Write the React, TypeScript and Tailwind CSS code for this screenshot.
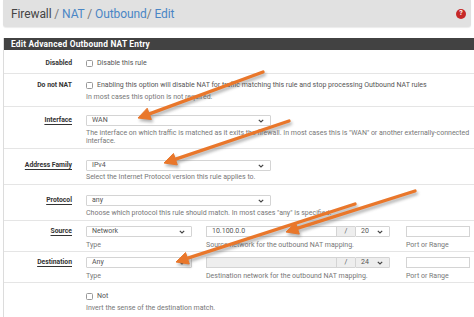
import React from "react";

type ArrowDef = { x1: number; y1: number; x2: number; y2: number };

const arrows: ArrowDef[] = [
  { x1: 263, y1: 72, x2: 138, y2: 118 },
  { x1: 289, y1: 121, x2: 164, y2: 163 },
  { x1: 415, y1: 191, x2: 286, y2: 232 },
  { x1: 355, y1: 204, x2: 176, y2: 262 },
];

function Arrow({ a, color, dx = 0, dy = 0 }: { a: ArrowDef; color: string; dx?: number; dy?: number }) {
  const vx = a.x2 - a.x1;
  const vy = a.y2 - a.y1;
  const len = Math.hypot(vx, vy);
  const ux = vx / len;
  const uy = vy / len;
  const headLen = 12;
  const headW = 6;
  const bx = a.x2 - ux * headLen;
  const by = a.y2 - uy * headLen;
  const px = -uy;
  const py = ux;
  const pts = [
    [a.x2 + dx, a.y2 + dy],
    [bx + px * headW + dx, by + py * headW + dy],
    [bx - px * headW + dx, by - py * headW + dy],
  ]
    .map((p) => p.join(","))
    .join(" ");
  return (
    <g>
      <line
        x1={a.x1 + dx}
        y1={a.y1 + dy}
        x2={bx + ux * 2 + dx}
        y2={by + uy * 2 + dy}
        stroke={color}
        strokeWidth={3.4}
        strokeLinecap="round"
      />
      <polygon points={pts} fill={color} strokeLinejoin="round" stroke={color} strokeWidth={1} />
    </g>
  );
}

function Chevron() {
  return (
    <svg width="6" height="4" viewBox="0 0 6 4" className="shrink-0">
      <path d="M0.8 0.8 L3 3 L5.2 0.8" fill="none" stroke="#444" strokeWidth="1.2" />
    </svg>
  );
}

function Select({ value, w, disabled = false }: { value: string; w: string; disabled?: boolean }) {
  return (
    <div
      className={`${w} h-[11px] border border-[#d4d4d4] rounded-[1px] flex items-center justify-between pl-[5px] pr-[6px] text-[7px] text-[#555] ${
        disabled ? "bg-[#eeeeee]" : "bg-white"
      }`}
    >
      <span>{value}</span>
      <Chevron />
    </div>
  );
}

function Checkbox() {
  return <div className="w-[7px] h-[7px] border border-[#999] rounded-[1.5px] bg-white shrink-0" />;
}

function Help({ children, className = "" }: { children: React.ReactNode; className?: string }) {
  return <div className={`text-[7px] leading-[8px] text-[#777] whitespace-nowrap ${className}`}>{children}</div>;
}

function Label({ text, underline = false }: { text: string; underline?: boolean }) {
  return (
    <div className="w-[68px] shrink-0 h-[11px] flex items-center justify-end">
      <span
        className={`text-[6.8px] font-bold text-[#333] whitespace-nowrap ${
          underline ? "underline decoration-[#333] underline-offset-[1.5px]" : ""
        }`}
      >
        {text}
      </span>
    </div>
  );
}

export default function App() {
  return (
    <div
      className="relative w-[474px] h-[317px] overflow-hidden bg-white"
      style={{ fontFamily: "Roboto, 'Liberation Sans', sans-serif" }}
    >
      {/* Breadcrumb */}
      <div className="mx-[3px] h-[27px] bg-[#e1e1e1] rounded-b-[3px] shadow-[0_1px_1px_rgba(0,0,0,0.08)] flex items-center justify-between pl-[8px] pr-[5px]">
        <div className="text-[12px] text-[#444] whitespace-nowrap tracking-[-0.1px]">
          Firewall <span className="text-[#777]">/</span> <span className="text-[#4a86c5]">NAT</span>{" "}
          <span className="text-[#777]">/</span> <span className="text-[#4a86c5]">Outbound</span>
          <span className="text-[#777]">/</span> <span className="text-[#4a86c5]">Edit</span>
        </div>
        <div className="w-[10px] h-[10px] rounded-full bg-[#c62828] text-white text-[7px] font-bold flex items-center justify-center leading-none">
          ?
        </div>
      </div>

      {/* Panel */}
      <div className="mt-[11px] ml-[3px] border-l border-[#dcdcdc]">
        <div className="h-[12px] bg-[#424242] flex items-center pl-[7px]">
          <span className="text-white font-bold text-[8.4px] tracking-[0.2px] whitespace-nowrap">
            Edit Advanced Outbound NAT Entry
          </span>
        </div>

        {/* Disabled */}
        <div className="h-[24px] flex pt-[8px] border-b border-[#e5e5e5]">
          <Label text="Disabled" />
          <div className="ml-[14px] h-[11px] flex items-center gap-[4px]">
            <Checkbox />
            <span className="text-[7px] text-[#555]">Disable this rule</span>
          </div>
        </div>

        {/* Do not NAT */}
        <div className="h-[33px] flex pt-[6px] border-b border-[#e5e5e5]">
          <Label text="Do not NAT" />
          <div className="ml-[14px]">
            <div className="h-[11px] flex items-center gap-[4px]">
              <Checkbox />
              <span className="text-[7px] text-[#555] whitespace-nowrap">
                Enabling this option will disable NAT for traffic matching this rule and stop processing Outbound NAT rules
              </span>
            </div>
            <Help className="mt-[2px]">In most cases this option is not required.</Help>
          </div>
        </div>

        {/* Interface */}
        <div className="h-[42px] flex pt-[8px] border-b border-[#e5e5e5]">
          <Label text="Interface" underline />
          <div className="ml-[14px]">
            <Select value="WAN" w="w-[185px]" />
            <Help className="mt-[3px]">
              The interface on which traffic is matched as it exits the firewall. In most cases this is "WAN" or another
              externally-connected
            </Help>
            <Help>interface.</Help>
          </div>
        </div>

        {/* Address Family */}
        <div className="h-[36px] flex pt-[11px] border-b border-[#e5e5e5]">
          <Label text="Address Family" underline />
          <div className="ml-[14px]">
            <Select value="IPv4" w="w-[185px]" />
            <Help className="mt-[2px]">Select the Internet Protocol version this rule applies to.</Help>
          </div>
        </div>

        {/* Protocol */}
        <div className="h-[36px] flex pt-[10px] border-b border-[#e5e5e5]">
          <Label text="Protocol" underline />
          <div className="ml-[14px]">
            <Select value="any" w="w-[185px]" />
            <Help className="mt-[3px]">Choose which protocol this rule should match. In most cases "any" is specified.</Help>
          </div>
        </div>

        {/* Source */}
        <div className="h-[31px] flex pt-[5px] border-b border-[#e5e5e5]">
          <Label text="Source" underline />
          <div className="ml-[14px] flex">
            <div className="w-[120px]">
              <Select value="Network" w="w-[106px]" />
              <Help className="mt-[4px]">Type</Help>
            </div>
            <div className="w-[200px]">
              <div className="flex">
                <div className="w-[131px] h-[11px] border border-[#d4d4d4] bg-white pl-[5px] flex items-center text-[7px] text-[#555]">
                  10.100.0.0
                </div>
                <div className="w-[18px] h-[11px] border-y border-[#d4d4d4] bg-[#eeeeee] flex items-center justify-center text-[7px] text-[#555]">
                  /
                </div>
                <Select value="20" w="w-[35px]" />
              </div>
              <Help className="mt-[4px]">Source network for the outbound NAT mapping.</Help>
            </div>
            <div>
              <div className="w-[64px] h-[11px] border border-[#d4d4d4] bg-white" />
              <Help className="mt-[4px]">Port or Range</Help>
            </div>
          </div>
        </div>

        {/* Destination */}
        <div className="h-[31px] flex pt-[5px] border-b border-[#e5e5e5]">
          <Label text="Destination" underline />
          <div className="ml-[14px] flex">
            <div className="w-[120px]">
              <Select value="Any" w="w-[106px]" />
              <Help className="mt-[4px]">Type</Help>
            </div>
            <div className="w-[200px]">
              <div className="flex">
                <div className="w-[131px] h-[11px] border border-[#d4d4d4] bg-[#eeeeee]" />
                <div className="w-[18px] h-[11px] border-y border-[#d4d4d4] bg-[#eeeeee] flex items-center justify-center text-[7px] text-[#555]">
                  /
                </div>
                <Select value="24" w="w-[35px]" disabled />
              </div>
              <Help className="mt-[4px]">Destination network for the outbound NAT mapping.</Help>
            </div>
            <div>
              <div className="w-[64px] h-[11px] border border-[#d4d4d4] bg-white" />
              <Help className="mt-[4px]">Port or Range</Help>
            </div>
          </div>
        </div>

        {/* Not */}
        <div className="h-[40px] flex pt-[8px]">
          <div className="w-[68px] shrink-0" />
          <div className="ml-[14px]">
            <div className="h-[11px] flex items-center gap-[4px]">
              <Checkbox />
              <span className="text-[7px] text-[#555]">Not</span>
            </div>
            <Help className="mt-[2px]">Invert the sense of the destination match.</Help>
          </div>
        </div>
      </div>

      {/* Annotation arrows */}
      <svg className="absolute inset-0 pointer-events-none" width="474" height="317" viewBox="0 0 474 317">
        <defs>
          <filter id="blur" x="-20%" y="-20%" width="140%" height="140%">
            <feGaussianBlur stdDeviation="1.5" />
          </filter>
        </defs>
        <g filter="url(#blur)" opacity="0.45">
          {arrows.map((a, i) => (
            <Arrow key={"s" + i} a={a} color="#555" dx={1.5} dy={2.5} />
          ))}
        </g>
        {arrows.map((a, i) => (
          <Arrow key={i} a={a} color="#e9772b" />
        ))}
      </svg>
    </div>
  );
}
